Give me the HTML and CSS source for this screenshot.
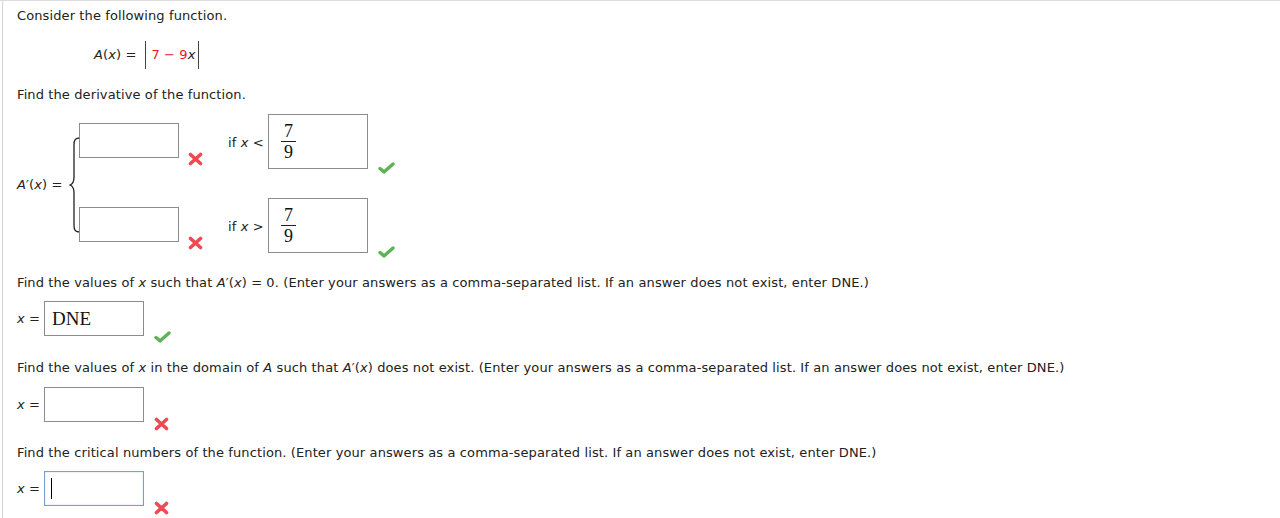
FILE: index.html
```html
<!DOCTYPE html>
<html>
<head>
<meta charset="utf-8">
<link rel="stylesheet" href="styles.css">
</head>
<body>
<div class="page">
  <p class="txt t1">Consider the following function.</p>
  <div class="eq"><span class="m"><i>A</i>(<i>x</i>) =</span><span class="abs"><span class="red">7 − 9</span><i>x</i></span></div>
  <p class="txt t2">Find the derivative of the function.</p>

  <div class="pw">
    <span class="pw-label"><i>A</i>′(<i>x</i>) =</span>
    <svg class="brace" width="12" height="96" viewBox="0 0 12 96"><path d="M11 1 C6 1 5 3 5 8 L5 40 C5 45 4 47 1 48 C4 49 5 51 5 56 L5 88 C5 93 6 95 11 95" fill="none" stroke="#222" stroke-width="1.3"/></svg>
    <div class="rows">
      <div class="row">
        <div class="box in"></div>
        <svg class="xmark" width="15" height="14" viewBox="0 0 15 14"><path d="M2.5 2.5 L12.5 11.5 M12.5 2.5 L2.5 11.5" stroke="#ee4a52" stroke-width="3.6" stroke-linecap="round"/></svg>
        <span class="cond">if <i>x</i> &lt;</span>
        <div class="box frac-box"><span class="frac"><span class="num">7</span><span class="den">9</span></span></div>
        <svg class="check" width="17" height="12" viewBox="0 0 17 12"><path d="M2 6.5 L6 10 L15 2" fill="none" stroke="#5fb356" stroke-width="3.4" stroke-linecap="round" stroke-linejoin="round"/></svg>
      </div>
      <div class="row r2">
        <div class="box in"></div>
        <svg class="xmark" width="15" height="14" viewBox="0 0 15 14"><path d="M2.5 2.5 L12.5 11.5 M12.5 2.5 L2.5 11.5" stroke="#ee4a52" stroke-width="3.6" stroke-linecap="round"/></svg>
        <span class="cond">if <i>x</i> &gt;</span>
        <div class="box frac-box"><span class="frac"><span class="num">7</span><span class="den">9</span></span></div>
        <svg class="check" width="17" height="12" viewBox="0 0 17 12"><path d="M2 6.5 L6 10 L15 2" fill="none" stroke="#5fb356" stroke-width="3.4" stroke-linecap="round" stroke-linejoin="round"/></svg>
      </div>
    </div>
  </div>

  <p class="txt t3">Find the values of <i>x</i> such that <i>A</i>′(<i>x</i>) = 0. (Enter your answers as a comma-separated list. If an answer does not exist, enter DNE.)</p>
  <div class="ans a1">
    <span class="alabel"><i>x</i> =</span>
    <div class="box abox"><span class="dne">DNE</span></div>
    <svg class="check amark" width="17" height="12" viewBox="0 0 17 12"><path d="M2 6.5 L6 10 L15 2" fill="none" stroke="#5fb356" stroke-width="3.4" stroke-linecap="round" stroke-linejoin="round"/></svg>
  </div>

  <p class="txt t4">Find the values of <i>x</i> in the domain of <i>A</i> such that <i>A</i>′(<i>x</i>) does not exist. (Enter your answers as a comma-separated list. If an answer does not exist, enter DNE.)</p>
  <div class="ans a2">
    <span class="alabel"><i>x</i> =</span>
    <div class="box abox"></div>
    <svg class="xmark amark" width="15" height="14" viewBox="0 0 15 14"><path d="M2.5 2.5 L12.5 11.5 M12.5 2.5 L2.5 11.5" stroke="#ee4a52" stroke-width="3.6" stroke-linecap="round"/></svg>
  </div>

  <p class="txt t5">Find the critical numbers of the function. (Enter your answers as a comma-separated list. If an answer does not exist, enter DNE.)</p>
  <div class="ans a3">
    <span class="alabel"><i>x</i> =</span>
    <div class="box abox focus"><span class="cursor"></span></div>
    <svg class="xmark amark" width="15" height="14" viewBox="0 0 15 14"><path d="M2.5 2.5 L12.5 11.5 M12.5 2.5 L2.5 11.5" stroke="#ee4a52" stroke-width="3.6" stroke-linecap="round"/></svg>
  </div>
</div>
</body>
</html>
```

FILE: styles.css
```css
html, body {
  margin: 0;
  padding: 0;
  background: #fff;
}
body {
  border-top: 1px solid #dcdcdc;
  font-family: "DejaVu Sans", Verdana, sans-serif;
  font-size: 13px;
  line-height: 16px;
  letter-spacing: 0.11px;
  color: #222;
}
.page {
  margin-left: 2px;
  border-left: 1px solid #d4d4d4;
  padding-left: 14px;
  height: 517px;
  box-sizing: border-box;
  overflow: hidden;
}
i { font-style: italic; }
.txt { margin: 0; white-space: nowrap; }
.t1 { margin-top: 7px; }
.eq {
  margin-top: 17px;
  padding-left: 77px;
  line-height: 28px;
  height: 28px;
  display: flex;
}
.eq .m { margin-right: 9px; }
.abs {
  display: inline-block;
  border-left: 1px solid #444;
  border-right: 1px solid #444;
  padding: 0 2px 0 5px;
  height: 28px;
}
.red { color: #e8191f; }
.t2 { margin-top: 18px; }

.pw {
  margin-top: 11px;
  display: flex;
  align-items: flex-start;
}
.pw-label { margin-top: 63px; width: 52px; }
.brace { margin-top: 23px; flex: none; }
.rows { display: flex; flex-direction: column; margin-left: -2px; }
.row { display: flex; align-items: flex-start; height: 59px; }
.row.r2 { margin-top: 25px; }
.box {
  box-sizing: border-box;
  border: 1px solid #8c8c8c;
  background: #fff;
  flex: none;
}
.in { width: 100px; height: 35px; margin-top: 9px; }
.xmark { flex: none; margin-left: 9px; margin-top: 38px; }
.cond { margin-left: 25px; margin-top: 21px; width: 40px; white-space: nowrap; }
.frac-box {
  width: 100px;
  height: 55px;
  display: flex;
  align-items: center;
  padding-left: 12px;
}
.frac {
  display: flex;
  flex-direction: column;
  align-items: center;
  font-family: "Liberation Serif", "Times New Roman", serif;
  font-size: 18px;
  line-height: 17px;
  letter-spacing: 0;
  color: #111;
}
.num { border-bottom: 1px solid #222; padding: 0 1px 1px; width: 13px; text-align: center; }
.den { padding-top: 2px; }
.check { flex: none; margin-left: 10px; margin-top: 48px; }

.t3 { margin-top: 18px; }
.ans { display: flex; align-items: flex-start; }
.a1 { margin-top: 10px; }
.alabel { width: 27px; margin-top: 10px; }
.abox { width: 100px; height: 35px; display: flex; align-items: center; }
.amark { margin-left: 10px; margin-top: 30px; }
.dne {
  font-family: "Liberation Serif", "Times New Roman", serif;
  font-size: 19px;
  letter-spacing: 0;
  color: #111;
  padding-left: 7px;
}
.t4 { margin-top: 17px; }
.a2 { margin-top: 11px; }
.t5 { margin-top: 14px; }
.a3 { margin-top: 10px; }
.focus {
  border-color: #7a9fcc;
  box-shadow: inset 0 0 2px #c4d6ec;
}
.cursor {
  display: block;
  width: 1px;
  height: 21px;
  background: #000;
  margin-left: 6px;
}
```
